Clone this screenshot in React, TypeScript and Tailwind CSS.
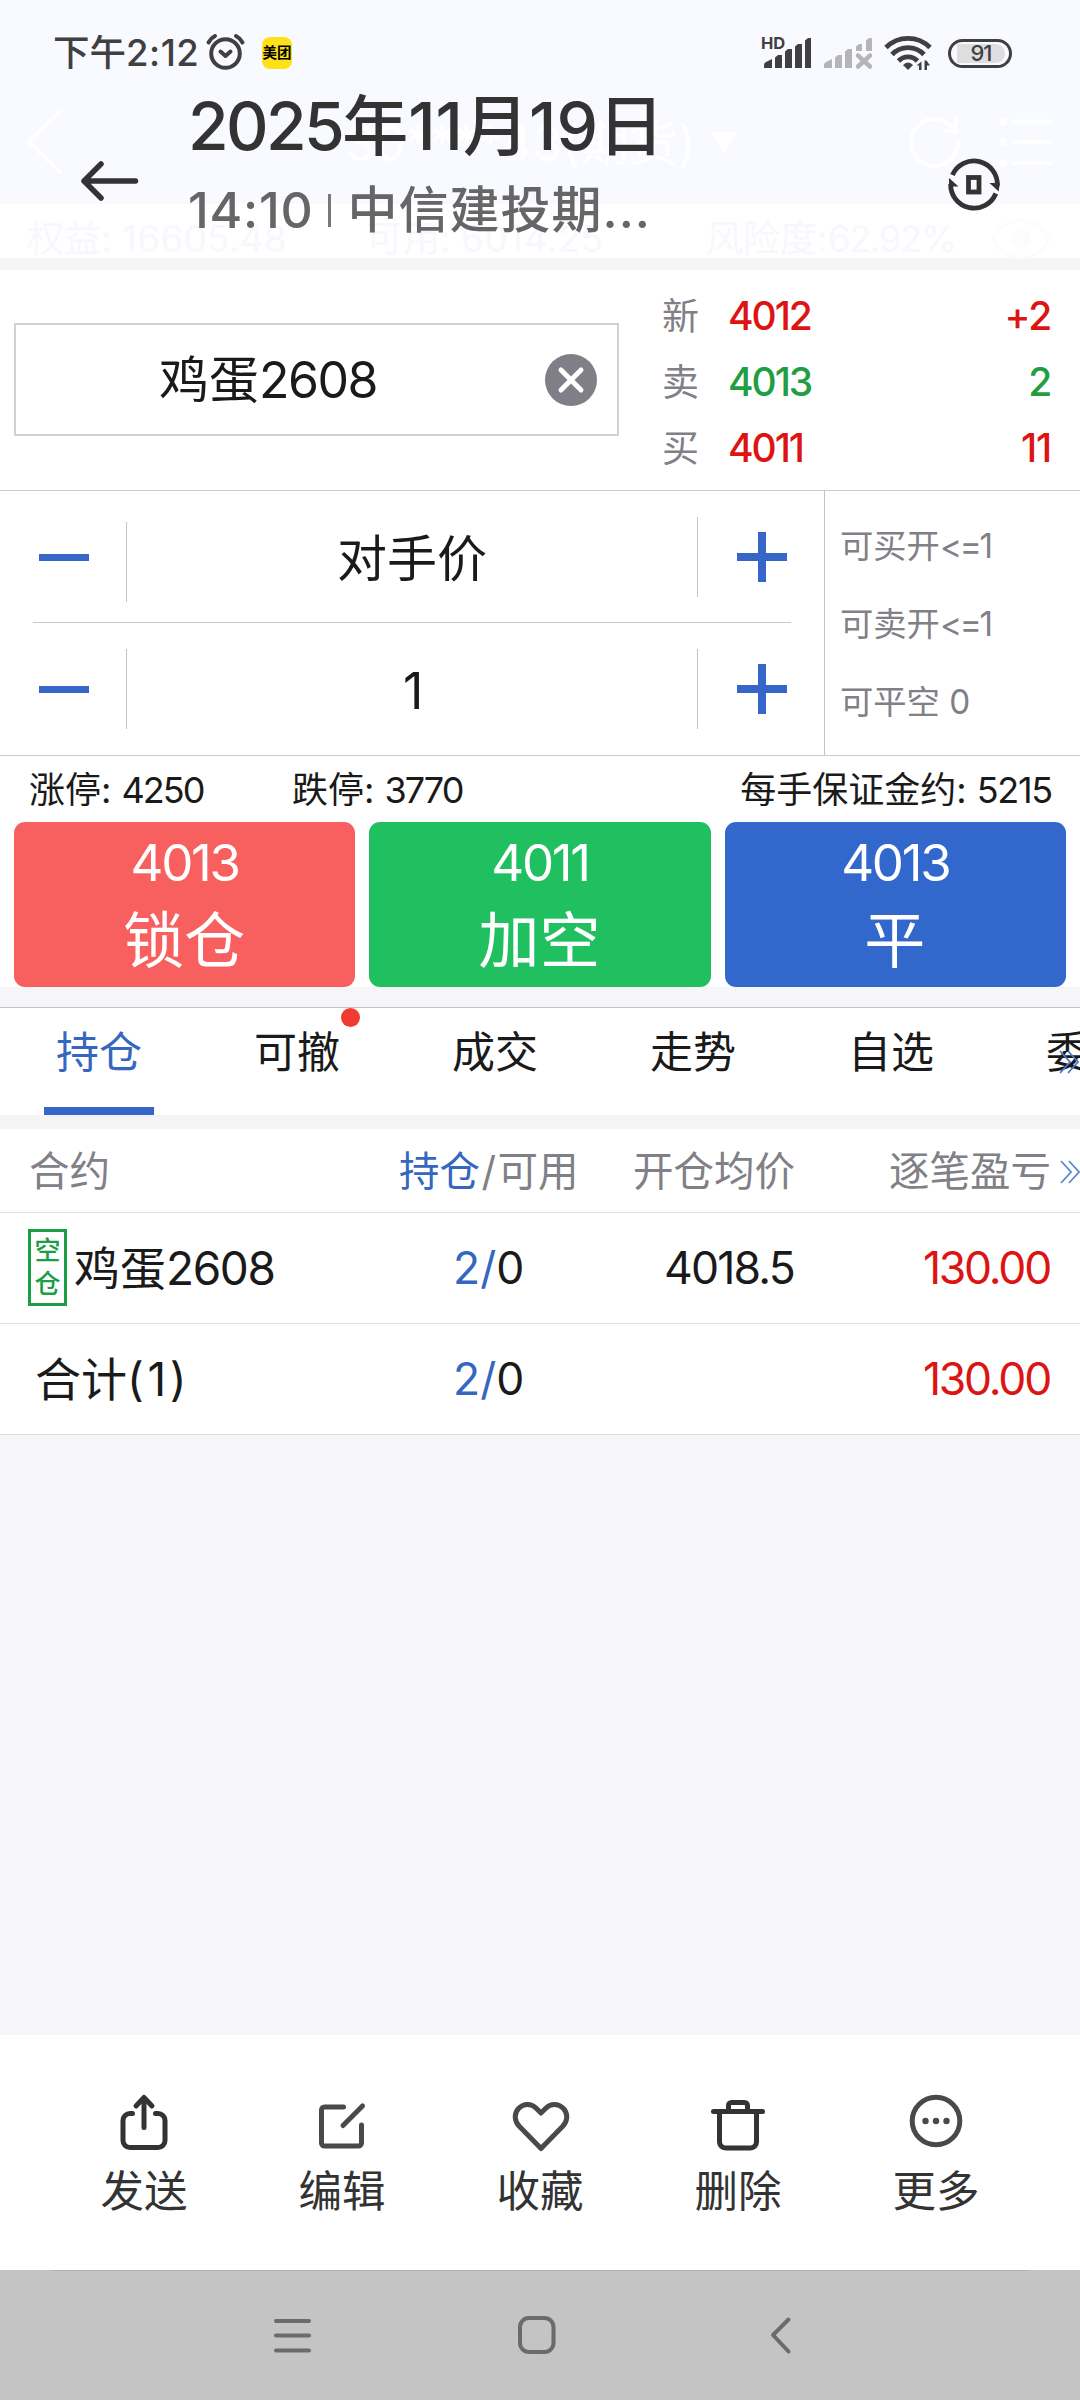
import React from 'react';

const Num: React.FC<{ children: React.ReactNode; className?: string }> = ({ children, className = 'tracking-[-0.045em]' }) => (
  <span className={className}>{children}</span>
);

const quotes = [
  { label: '新', price: '4012', extra: '+2', color: 'text-[#dc1414]' },
  { label: '卖', price: '4013', extra: '2', color: 'text-[#1f9e42]' },
  { label: '买', price: '4011', extra: '11', color: 'text-[#dc1414]' },
];

const orderButtons = [
  { price: '4013', label: '锁仓', color: 'bg-[#f86060]' },
  { price: '4011', label: '加空', color: 'bg-[#20c060]' },
  { price: '4013', label: '平', color: 'bg-[#3267cc]' },
];

const tabs = [
  { label: '持仓', active: true },
  { label: '可撤', dot: true },
  { label: '成交' },
  { label: '走势' },
  { label: '自选' },
  { label: '委托' },
];

const SendIcon = () => (
  <svg width="60" height="60" viewBox="0 0 60 60" fill="none" stroke="#333" strokeWidth="5" strokeLinecap="round" strokeLinejoin="round">
    <path d="M18.500 21.500h-2.500a7 7 0 0 0-7 7v20a7 7 0 0 0 7 7h28a7 7 0 0 0 7-7v-20a7 7 0 0 0-7-7h-2.500" />
    <path d="M30 35.500V6" />
    <path d="M22 14l8-8.500 8 8.500" />
  </svg>
);

const EditIcon = () => (
  <svg width="60" height="60" viewBox="0 0 60 60" fill="none" stroke="#494949" strokeWidth="5" strokeLinecap="round" strokeLinejoin="round">
    <path d="M31.500 15h-19a3 3 0 0 0-3 3v33a3 3 0 0 0 3 3h34a3 3 0 0 0 3-3V33" />
    <path d="M31 33.500L50.500 14" />
  </svg>
);

const HeartIcon = () => (
  <svg width="60" height="60" viewBox="-1 1 60 60" fill="none" stroke="#494949" strokeWidth="5" strokeLinecap="round" strokeLinejoin="round">
    <path d="M30 57.500L8.500 35.500C3 30 3 22.500 7.500 17.500c5.500-5.500 13-5 18 0l4.500 4.500 4.500-4.500c5-5 12.500-5.500 18 0 4.500 5 4.500 12.500-1 18z" />
  </svg>
);

const TrashIcon = () => (
  <svg width="60" height="60" viewBox="0 0 60 60" fill="none" stroke="#333" strokeWidth="5" strokeLinecap="round" strokeLinejoin="round">
    <path d="M5.500 19.500h49" />
    <path d="M20.500 19v-5.500a3 3 0 0 1 3-3h13a3 3 0 0 1 3 3V19" />
    <path d="M11.500 20v30a6 6 0 0 0 6 6h25a6 6 0 0 0 6-6V20" />
  </svg>
);

const MoreIcon = () => (
  <svg width="60" height="60" viewBox="0 0 60 60" fill="none">
    <circle cx="30" cy="29" r="23.800" stroke="#494949" strokeWidth="5" />
    <circle cx="19.500" cy="29" r="3.200" fill="#494949" />
    <circle cx="30" cy="29" r="3.200" fill="#494949" />
    <circle cx="40.500" cy="29" r="3.200" fill="#494949" />
  </svg>
);

const actions = [
  { label: '发送', icon: SendIcon },
  { label: '编辑', icon: EditIcon },
  { label: '收藏', icon: HeartIcon },
  { label: '删除', icon: TrashIcon },
  { label: '更多', icon: MoreIcon },
];

const StatusBar = () => (
  <div className="relative flex h-[80px] items-center pt-[26px] pl-[53px] text-[#404040]">
    <div className="w-[146px] whitespace-nowrap text-[36.500px] leading-[54px] font-medium">
      下午<span className="tracking-[0.015em]">2:12</span>
    </div>
    <svg className="ml-[5px]" width="44" height="40" viewBox="0 0 44 40" fill="none" stroke="#404040" strokeWidth="4" strokeLinecap="round" strokeLinejoin="round">
      <circle cx="21.500" cy="20.500" r="14.300" />
      <path d="M4.500 9.500C6 6.500 8 4.500 11 3M38.500 9.500C37 6.500 35 4.500 32 3" />
      <path d="M16.500 18.500l5 4.500 5-4.500" />
    </svg>
    <div className="ml-[14px] flex h-[32px] w-[30px] items-center justify-center rounded-[8px] bg-[#ffe11a] text-[14.500px] leading-none font-bold text-black">
      美团
    </div>
    <svg className="ml-[469px]" width="172" height="40" viewBox="0 0 172 40" fill="none">
      <text x="0" y="15.500" fontSize="16.500" fontWeight="700" fill="#404040">HD</text>
      <g fill="#404040">
        <path d="M3 35v-3q0-2 2-3l6-3v9z" />
        <path d="M14 35V24.500l3-2.500h4v13z" />
        <path d="M24 35V18.500l3-2.500h4v19z" />
        <path d="M34 35V13.500l3-2.500h4v24z" />
        <path d="M44 35V7.500L47 5h3v30z" />
      </g>
      <g fill="#b5b5b5">
        <path d="M63 35v-3q0-2 2-3l6-3v9z" />
        <path d="M74 35V24.500l3-2.500h4v13z" />
        <path d="M84 35V18.500l3-2.500h4v19z" />
        <path d="M95 18v-4.500l3-2.500h3v7z" />
        <path d="M105 18V7.500l3-2.500h3v13z" />
      </g>
      <path d="M97 22.500l12 11M109 22.500l-12 11" stroke="#b5b5b5" strokeWidth="4.500" strokeLinecap="round" />
      <g stroke="#404040" strokeWidth="4.800">
        <path d="M125 14.500a31 31 0 0 1 44 0" />
        <path d="M131 21.500a22 22 0 0 1 32 0" />
        <path d="M137.500 28a13 13 0 0 1 19 0" />
      </g>
      <path d="M142.500 32q4.500-4 9 0l-4.500 4.500z" fill="#404040" stroke="#404040" />
      <path d="M155.500 32.500l5-4v8.500h-2.500v-4.500zM163.500 37V27.500h2l3.500 5h-3V37z" fill="#404040" />
    </svg>
    <div className="ml-[15px] flex h-[29px] w-[64px] items-center rounded-full border-[3px] border-[#404040] p-[2px]">
      <div className="ml-[4px] flex h-[19px] w-[48px] items-center justify-center rounded-r-full rounded-l-[6px] bg-[#dedede] text-[22px] leading-none font-medium">
        <Num>91</Num>
      </div>
    </div>
  </div>
);

// account header that shows faintly through the translucent title bar
const FadedHeader = () => (
  <div className="absolute inset-0 bg-white">
    <div className="relative h-[204px] bg-[#f9faff]">
      <svg className="absolute inset-0" width="1080" height="204" viewBox="0 0 1080 204" fill="none" stroke="#fff" strokeWidth="4">
        <path d="M61 111L29 142l32 31" />
        <path d="M711 132h27l-13.500 21z" fill="#fff" stroke="none" />
        <path d="M953 128a23.500 23.500 0 1 0 5 14M956 118v13h-12" />
        <path d="M1012 121.500h40M1012 142h40M1012 163h40" />
        <path d="M1000 121.500h7M1000 142h7M1000 163h7" strokeWidth="7" />
      </svg>
      <div className="absolute top-[112px] left-[345px] text-[49px] leading-[64px] whitespace-nowrap text-white">
        <Num className="tracking-[-0.005em]">30****43</Num>(期货)
      </div>
    </div>
    <div className="flex h-[54px] items-center pt-[16px] pl-[27px] text-[37px] leading-[38px] whitespace-nowrap text-[#f7f8fd]">
      <div className="w-[339px]">权益: <Num className="tracking-[0.005em]">16605.48</Num></div>
      <div className="w-[340px]">可用: <Num className="tracking-[0.01em]">6014.25</Num></div>
      <div className="w-[285px]">风险度:<Num>62.92%</Num></div>
      <svg className="shrink-0" width="60" height="42" viewBox="0 0 60 42" fill="none" stroke="#fcfcfd" strokeWidth="3">
        <path d="M2 21C14-4 46-4 58 21 46 46 14 46 2 21z" />
        <circle cx="30" cy="21" r="8.500" fill="#fcfcfd" />
      </svg>
    </div>
  </div>
);

const Header = () => (
  <header className="relative h-[258px]">
    <FadedHeader />
    <StatusBar />
    <div className="relative flex h-[178px]">
      <svg className="mt-[79px] ml-[79px]" width="60" height="44" viewBox="0 0 60 44" fill="none" stroke="#333" strokeWidth="5.500" strokeLinecap="round" strokeLinejoin="round">
        <path d="M56.500 22H5M22 5L5 22l17 17" />
      </svg>
      <div className="ml-[49px] w-[502px] whitespace-nowrap">
        <h1 className="pt-px text-[66px] leading-[90px] font-medium text-[#333]">
          <Num className="tracking-[-0.040em]">2025</Num>年<span>11</span>月<span>19</span>日
        </h1>
        <div className="-mt-px flex h-[80px] items-center text-[50px] font-medium text-[#666]">
          <span className="tracking-[0.015em]">14:10</span>
          <span className="mr-[17px] ml-[14px] h-[33px] w-[3px] bg-[#777]" />
          <span className="tracking-[1px]">中信建投期...</span>
        </div>
      </div>
      <svg className="mt-[77px] ml-[256px]" width="56" height="56" viewBox="0 0 56 56" fill="none" stroke="#333" strokeWidth="4.800">
        <path d="M6.500 18A23.400 23.400 0 0 1 51.300 29" />
        <path d="M49.800 36.500A23.400 23.400 0 0 1 4.700 27" />
        <path d="M43.500 26h10.200l-1 8.500zM3 21l9.500 8.500H3z" fill="#333" stroke="none" />
        <rect x="22.500" y="20.500" width="10.500" height="14.500" />
      </svg>
    </div>
  </header>
);

const Stepper: React.FC<{ children: React.ReactNode; first?: boolean }> = ({ children, first }) => (
  <div className="flex h-[132px] items-center">
    <div className="ml-[39px] h-[7px] w-[50px] bg-[#3566c8]" />
    <div className={`ml-[37px] h-[80px] w-px bg-[#c4c4c6] ${first ? 'mt-[10px]' : ''}`} />
    <div className="w-[570px] pt-[3px] text-center text-[50px] leading-[80px]">{children}</div>
    <div className="h-[80px] w-px bg-[#c4c4c6]" />
    <svg className="ml-[39px]" width="50" height="50" viewBox="0 0 50 50" stroke="#3566c8" strokeWidth="8">
      <path d="M0 25h50M25 0v50" />
    </svg>
  </div>
);

const App: React.FC = () => {
  return (
    <div className="flex h-[2400px] w-[1080px] flex-col overflow-hidden bg-[#f6f6f9] font-[Inter,'Noto_Sans_CJK_SC',sans-serif] text-[#1a1a1a]">
      <Header />
      <div className="h-[12px] shrink-0 bg-[#f5f5f8]" />

      {/* Contract and quotes */}
      <section className="flex h-[221px] shrink-0 border-b border-[#c9ccd0] bg-white">
        <div className="mt-[53px] ml-[14px] flex h-[113px] w-[605px] items-center border-2 border-[#cdd2d6]">
          <div className="ml-[139px] w-[226px] pt-px text-center text-[50px] leading-[80px] whitespace-nowrap">鸡蛋<Num className="tracking-[-0.030em]">2608</Num></div>
          <svg className="ml-[164px]" width="52" height="52" viewBox="0 0 52 52">
            <circle cx="26" cy="26" r="26" fill="#807f88" />
            <path d="M16 16l20 20M36 16L16 36" stroke="#fff" strokeWidth="5" strokeLinecap="round" />
          </svg>
        </div>
        <div className="mt-[13px] ml-[43px] w-[389px]">
          {quotes.map((q) => (
            <div key={q.label} className={`flex h-[66px] items-center text-[39px] ${q.color}`}>
              <span className="w-[66px] pt-px text-[37px] text-[#808086]">{q.label}</span>
              <Num className="font-medium tracking-[-0.053em]">{q.price}</Num>
              <Num className="ml-auto font-medium tracking-[-0.03em]">{q.extra}</Num>
            </div>
          ))}
        </div>
      </section>

      {/* Price and lots */}
      <section className="flex h-[265px] shrink-0 border-b border-[#c9ccd0] bg-white">
        <div className="w-[824px]">
          <Stepper first>对手价</Stepper>
          <div className="-mt-px ml-[33px] h-px w-[758px] bg-[#cbcbcd]" />
          <Stepper><Num>1</Num></Stepper>
        </div>
        <div className="flex flex-col border-l border-[#bfc4c9] pt-[16px] pl-[15px] text-[33.300px] leading-[78px] whitespace-nowrap text-[#808086]">
          <div>可买开<Num className="tracking-[-0.065em]">&lt;=1</Num></div>
          <div>可卖开<Num className="tracking-[-0.065em]">&lt;=1</Num></div>
          <div>可平空 <Num>0</Num></div>
        </div>
      </section>

      {/* Limits and order buttons */}
      <section className="h-[231px] shrink-0 bg-white">
        <div className="flex h-[66px] items-center pt-px pr-[28px] pl-[29px] text-[36px] leading-[64px]">
          <div className="w-[263px]">涨停: <Num className="tracking-[-0.055em]">4250</Num></div>
          <div>跌停: <Num className="tracking-[-0.055em]">3770</Num></div>
          <div className="ml-auto">每手保证金约: <Num className="tracking-[-0.035em]">5215</Num></div>
        </div>
        <div className="flex gap-[14px] px-[14px]">
          {orderButtons.map((b, index) => (
            <button key={index} className={`flex h-[165px] flex-1 flex-col items-center rounded-[11px] text-white ${b.color}`}>
              <Num className="mt-[6px] text-[51px] leading-[70px] tracking-[-0.045em]">{b.price}</Num>
              <span className="pt-px pr-px text-[61px] leading-[84px]">{b.label}</span>
            </button>
          ))}
        </div>
      </section>
      <div className="h-[21px] shrink-0 border-b border-[#c0c4ca]" />

      {/* Tabs */}
      <nav className="relative flex h-[107px] shrink-0 overflow-hidden bg-white">
        {tabs.map((tab) => (
          <div key={tab.label} className="relative flex w-[198px] shrink-0 flex-col items-center">
            <span className={`text-[43px] leading-[88px] ${tab.active ? 'text-[#3566c0]' : ''}`}>{tab.label}</span>
            {tab.active && <div className="mt-auto h-[8px] w-[110px] bg-[#3566c8]" />}
            {tab.dot && <div className="absolute top-0 left-[143px] h-[19px] w-[19px] rounded-full bg-[#f03c30]" />}
          </div>
        ))}
        <svg className="absolute top-[42px] right-0" width="22" height="24" viewBox="0 0 22 24" fill="none" stroke="#4a78c8" strokeWidth="1.800">
          <path d="M2 1l10 11L2 23M10 1l10 11-10 11" />
        </svg>
      </nav>
      <div className="h-[14px] shrink-0 bg-[#f5f5f5]" />

      {/* Positions */}
      <section className="shrink-0 bg-white text-[44.500px] leading-[80px] whitespace-nowrap">
        <div className="flex h-[84px] items-center border-b border-[#e0e0e3] pt-[2px] text-[40.500px] text-[#808086]">
          <div className="w-[399px] pl-[29px]">合约</div>
          <div className="w-[200px]"><span className="text-[#3566c0]">持仓</span><span className="px-[1.500px]">/</span>可用</div>
          <div className="w-[196px] text-right">开仓均价</div>
          <div className="w-[256px] text-right">逐笔盈亏</div>
          <svg className="ml-[9px]" width="20" height="24" viewBox="0 0 20 24" fill="none" stroke="#5b87cc" strokeWidth="1.800">
            <path d="M1 1l10 11L1 23M9 1l10 11L9 23" />
          </svg>
        </div>
        <div className="flex h-[111px] items-center border-b border-[#e0e0e3]">
          <div className="mb-[2px] ml-[28px] flex h-[77px] w-[39px] flex-col items-center justify-center border-[3px] border-[#1a9e46] text-[26px] leading-[33px] font-medium text-[#1a9e46]">
            <span>空</span>
            <span>仓</span>
          </div>
          <div className="ml-[7px] w-[379px] text-[46px]">鸡蛋<Num className="tracking-[-0.03em]">2608</Num></div>
          <div className="w-[71px]"><Num className="tracking-normal"><span className="text-[#3566c0]">2/</span>0</Num></div>
          <div className="w-[270px] text-right"><Num className="tracking-[-0.04em]">4018.5</Num></div>
          <div className="w-[256px] text-right text-[#dc1414]"><Num className="tracking-[-0.05em]">130.00</Num></div>
        </div>
        <div className="flex h-[111px] items-center border-b border-[#e0e0e3]">
          <div className="w-[453px] pl-[35px] text-[46px]">合计<Num className="tracking-[0.08em]">(1)</Num></div>
          <div className="w-[71px]"><Num className="tracking-normal"><span className="text-[#3566c0]">2/</span>0</Num></div>
          <div className="w-[526px] text-right text-[#dc1414]"><Num className="tracking-[-0.05em]">130.00</Num></div>
        </div>
      </section>

      {/* Toolbar */}
      <footer className="mt-auto flex h-[235px] shrink-0 bg-white px-[45px] text-[#333]">
        {actions.map((action) => (
          <div key={action.label} className="flex w-[198px] flex-col items-center pt-[57px]">
            <action.icon />
            <span className="mt-[7px] text-[43.500px] leading-[64px]">{action.label}</span>
          </div>
        ))}
      </footer>

      {/* System navigation */}
      <div className="flex h-[130px] shrink-0 flex-col items-center bg-[#c4c4c4]">
        <div className="h-px w-[976px] bg-[#b0b0b0]" />
        <svg width="1080" height="129" viewBox="0 0 1080 129" fill="none" stroke="#6b6b6b" strokeWidth="4" strokeLinecap="round" strokeLinejoin="round">
          <path d="M276 50h33M276 64.500h33M276 79.500h33" />
          <rect x="520" y="47" width="33.500" height="34" rx="9" />
          <path d="M788.500 48.500L773 64l15.500 16.500" />
        </svg>
      </div>
    </div>
  );
};

export default App;
